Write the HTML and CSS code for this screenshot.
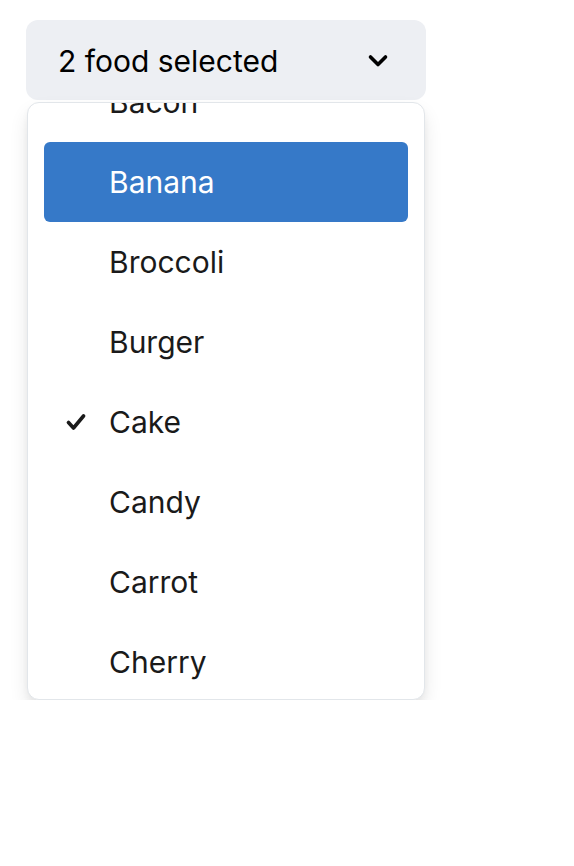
FILE: index.html
```html
<!DOCTYPE html>
<html lang="en">
<head>
<meta charset="UTF-8">
<title>Food menu</title>
<link rel="stylesheet" href="styles.css">
</head>
<body>
  <div class="menu">
    <button class="menu-button">
      <span>2 food selected</span>
      <svg class="chevron" viewBox="0 0 24 24" width="24" height="24"><path d="M4.5 8l7.5 7.5 7.5-7.5" fill="none" stroke="currentColor" stroke-width="3.6" stroke-linecap="round" stroke-linejoin="round"/></svg>
    </button>
    <div class="menu-list">
      <div class="menu-scroll">
        <div class="item"><span class="check"></span>Bacon</div>
        <div class="item active"><span class="check"></span>Banana</div>
        <div class="item"><span class="check"></span>Broccoli</div>
        <div class="item"><span class="check"></span>Burger</div>
        <div class="item"><span class="check"><svg viewBox="0 0 20 20" width="20" height="20"><path d="M2.5 10.5l5 5.5 10-12" fill="none" stroke="currentColor" stroke-width="3.6" stroke-linecap="round" stroke-linejoin="round"/></svg></span>Cake</div>
        <div class="item"><span class="check"></span>Candy</div>
        <div class="item"><span class="check"></span>Carrot</div>
        <div class="item"><span class="check"></span>Cherry</div>
      </div>
    </div>
  </div>
</body>
</html>
```

FILE: styles.css
```css
body {
  margin: 0;
  font-family: Inter, 'Noto Sans', sans-serif;
  color: #1a1a1a;
  background: #fff;
}
.menu {
  width: 400px;
  padding: 20px 0 0 26px;
}
.menu-button {
  width: 400px;
  height: 80px;
  display: flex;
  align-items: center;
  justify-content: space-between;
  padding: 2px 36px 0 32px;
  border: none;
  border-radius: 12px;
  background: #edeff3;
  font-family: inherit;
  font-size: 30px;
  color: #000;
  box-sizing: border-box;
}
.chevron {
  color: #000;
}
.menu-list {
  margin: 2px 0 0 1px;
  width: 398px;
  height: 598px;
  box-sizing: border-box;
  border: 1px solid #e2e6ea;
  border-radius: 12px;
  background: #fff;
  box-shadow: 0 10px 20px -2px rgba(0,0,0,0.12), 0 4px 8px -2px rgba(0,0,0,0.06);
  overflow: hidden;
}
.menu-scroll {
  margin-top: -41px;
  padding: 0 16px;
}
.item {
  height: 80px;
  display: flex;
  align-items: center;
  padding: 0 22px;
  border-radius: 6px;
  font-size: 30px;
}
.item.active {
  background: #3679c8;
  color: #fff;
}
.check {
  width: 20px;
  height: 20px;
  margin-right: 23px;
  display: flex;
  color: #1a1a1a;
}
```
